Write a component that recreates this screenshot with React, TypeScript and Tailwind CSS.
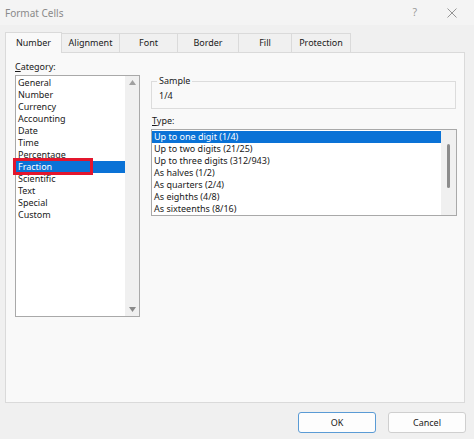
import React from "react";

const categories = [
  "General",
  "Number",
  "Currency",
  "Accounting",
  "Date",
  "Time",
  "Percentage",
  "Fraction",
  "Scientific",
  "Text",
  "Special",
  "Custom",
];

const types = [
  "Up to one digit (1/4)",
  "Up to two digits (21/25)",
  "Up to three digits (312/943)",
  "As halves (1/2)",
  "As quarters (2/4)",
  "As eighths (4/8)",
  "As sixteenths (8/16)",
];

const tabs = [
  { label: "Number", w: "w-[57px]" },
  { label: "Alignment", w: "w-[58px]" },
  { label: "Font", w: "w-[58px]" },
  { label: "Border", w: "w-[61px]" },
  { label: "Fill", w: "w-[53px]" },
  { label: "Protection", w: "w-[59px]" },
];

export default function App() {
  return (
    <div
      className="w-[474px] h-[439px] bg-[#f0f0f0] flex flex-col overflow-hidden text-[#1a1a1a]"
      style={{ fontFamily: '"Noto Sans", "Open Sans", Arial, sans-serif' }}
    >
      {/* Title bar */}
      <div className="h-[25px] flex items-center justify-between bg-[#f4f4f4] pl-[5px] pr-[17px]">
        <span className="text-[10px] text-[#8a8a8a] leading-none">Format Cells</span>
        <div className="flex items-center gap-[30px] text-[#9a9a9a]">
          <span className="text-[10.5px] leading-none">?</span>
          <svg width="10" height="10" viewBox="0 0 10 10" className="block">
            <path d="M0.5 0.5 L9.5 9.5 M9.5 0.5 L0.5 9.5" stroke="#8a8a8a" strokeWidth="0.9" fill="none" />
          </svg>
        </div>
      </div>

      {/* Tabs */}
      <div className="mt-[7px] ml-[5px] flex items-end h-[20px]">
        {tabs.map((t, i) => (
          <div
            key={t.label}
            className={`${t.w} flex items-center justify-center text-[9px] leading-none border-t border-r border-[#dadada] pb-[1px] ${
              i === 0
                ? "h-[21px] bg-[#f9f9f9] border-l -mb-px relative z-10"
                : "h-[19px] bg-[#f0f0f0]"
            }`}
          >
            {t.label}
          </div>
        ))}
      </div>

      {/* Panel */}
      <div className="ml-[5px] w-[460px] h-[351px] bg-[#f9f9f9] border border-[#dadada] flex pl-[9px] pt-[7px]">
        {/* Left column */}
        <div className="w-[125px] flex flex-col">
          <div className="h-[14px] text-[9px] leading-[14px]">
            <span className="underline underline-offset-1">C</span>ategory:
          </div>
          <div className="mt-[1px] h-[242px] w-[125px] bg-white border border-[#a9a9a9] flex relative">
            <div className="flex-1 pt-[1px] flex flex-col">
              {categories.map((c) => (
                <div
                  key={c}
                  className={`h-[12px] leading-[12px] text-[9px] pl-[2px] ${
                    c === "Fraction" ? "bg-[#0a72d6] text-white" : ""
                  }`}
                >
                  {c}
                </div>
              ))}
            </div>
            <div className="w-[14px] bg-[#f0f0f0] flex flex-col items-center justify-between py-[4px]">
              <svg width="7" height="5" viewBox="0 0 7 5">
                <path d="M3.5 0 L7 5 L0 5 Z" fill="#a0a0a0" />
              </svg>
              <svg width="7" height="5" viewBox="0 0 7 5">
                <path d="M0 0 L7 0 L3.5 5 Z" fill="#8a8a8a" />
              </svg>
            </div>
            {/* red highlight */}
            <div className="absolute left-[-3px] top-[82px] w-[80px] h-[17px] border-[3px] border-[#e3162d]" />
          </div>
        </div>

        {/* Right column */}
        <div className="ml-[11px] w-[306px] flex flex-col">
          <fieldset className="mt-[15px] h-[34px] w-[305px] border border-[#dcdcdc] pl-[7px]">
            <legend className="ml-[-2px] px-[2px] text-[9px] leading-[12px]">Sample</legend>
            <div className="text-[9px] leading-[12px] mt-[3px]">1/4</div>
          </fieldset>
          <div className="mt-[5px] h-[14px] text-[9px] leading-[14px] pl-[1px]">
            <span className="underline underline-offset-1">T</span>ype:
          </div>
          <div className="mt-[1px] h-[87px] w-[306px] bg-white border border-[#a9a9a9] flex overflow-hidden">
            <div className="flex-1 pt-[1px] flex flex-col overflow-hidden">
              {types.map((t, i) => (
                <div
                  key={t}
                  className={`h-[12px] shrink-0 leading-[12px] text-[9px] pl-[2px] ${
                    i === 0 ? "bg-[#0a72d6] text-white" : ""
                  }`}
                >
                  {t}
                </div>
              ))}
            </div>
            <div className="w-[15px] bg-[#f0f0f0] flex justify-center pt-[14px]">
              <div className="w-[3px] h-[44px] rounded-full bg-[#8c8c8c]" />
            </div>
          </div>
        </div>
      </div>

      {/* Footer */}
      <div className="flex-1 flex justify-end items-start pt-[9px] pr-[8px] gap-[12px]">
        <button className="w-[78px] h-[21px] rounded-[3px] bg-[#fdfdfd] border border-[#5a9bd5] text-[9px] leading-none">
          OK
        </button>
        <button className="w-[78px] h-[21px] rounded-[3px] bg-[#fdfdfd] border border-[#cfcfcf] text-[9px] leading-none">
          Cancel
        </button>
      </div>
    </div>
  );
}
